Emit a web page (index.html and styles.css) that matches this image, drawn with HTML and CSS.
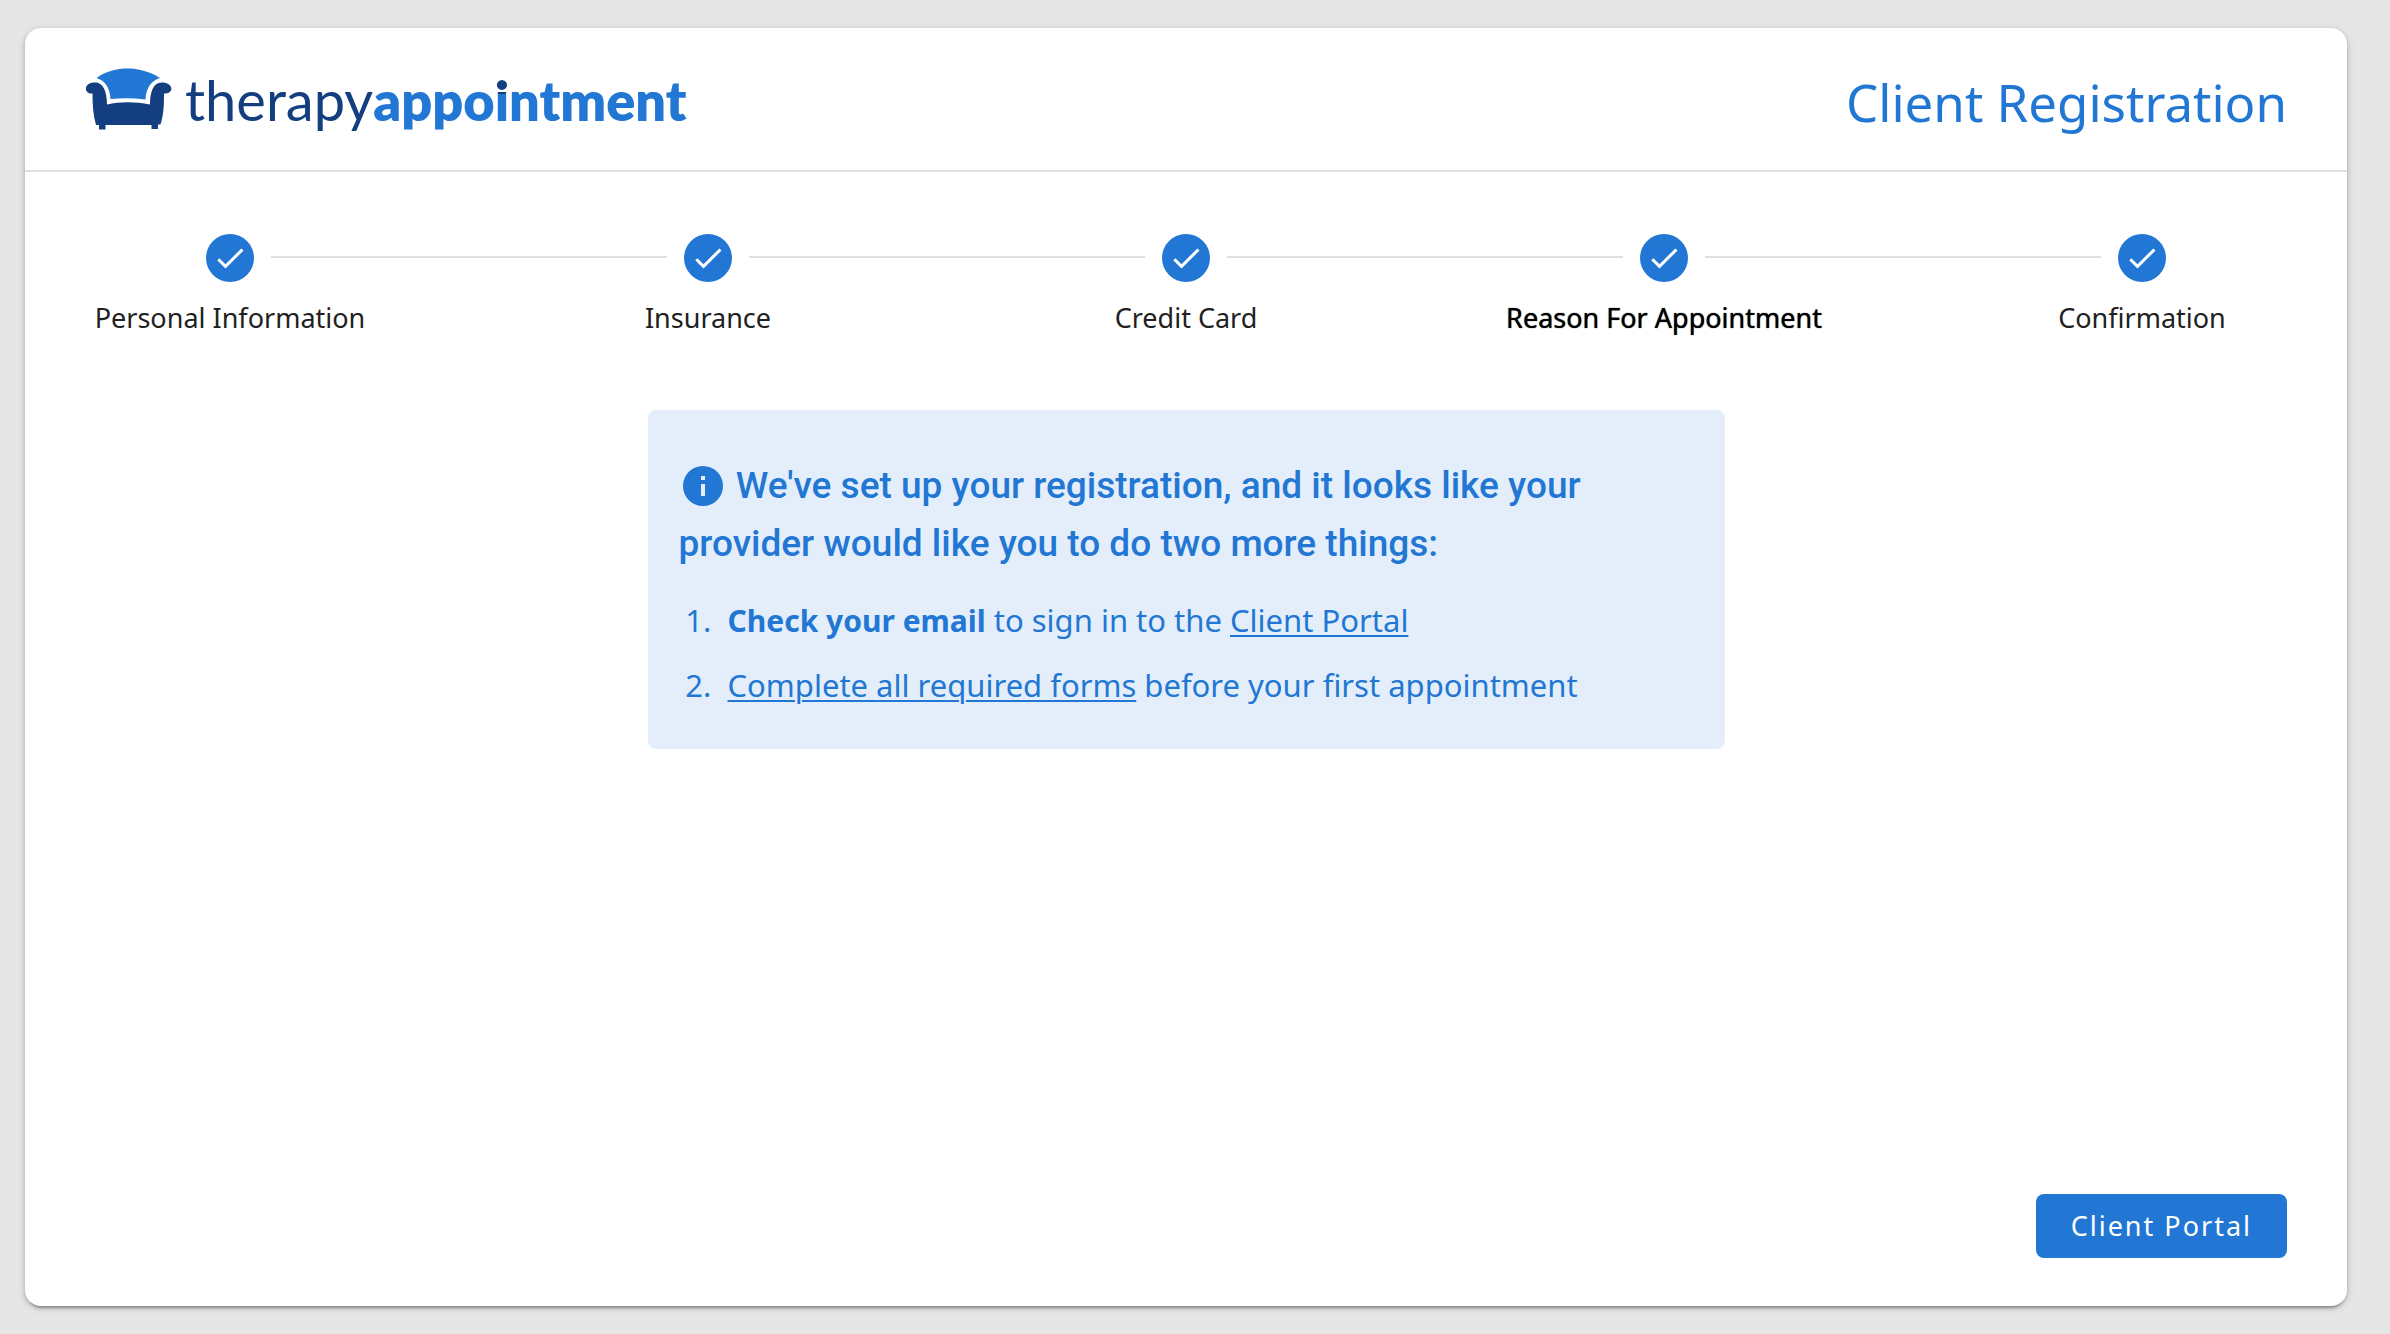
FILE: index.html
```
<!DOCTYPE html>
<html lang="en">
<head>
  <meta charset="utf-8">
  <meta name="viewport" content="width=device-width, initial-scale=1">
  <title>Client Registration</title>
  <link rel="stylesheet" href="styles.css">
</head>
<body>
  <svg class="sprite" aria-hidden="true">
    <symbol id="check" viewBox="0 0 24 24">
      <path d="M21 7 9 19l-5.5-5.5 1.41-1.41L9 16.17 19.59 5.59 21 7Z"/>
    </symbol>
  </svg>
  <div class="card">
    <header class="header">
      <div class="logo">
        <svg class="chair" viewBox="0 0 88 62" aria-hidden="true">
          <path class="light" d="M11.500 10C21 3 32 .5 42.500 .5S64 3 75 10C66 13 61 20 60.500 31.500 49 30 37 30 25.500 31 25 20 20 12.500 11.500 10Z"/>
          <path class="dark" d="M9 14.500c8-1 13 7 13 22 13-3 28-3 43 0 0-14 4-23 13-22 11 1 11 11.500 1 11 0 10 0 20-3.500 31H73v4.500h-6.500V57H20.500v4.500H14V57h-3C8 47 7.500 36 7.500 25.500-2 26-1 14.500 9 14.500Z"/>
        </svg>
        <span class="wordmark"><span class="therapy">therapy</span><span class="appointment">appo<span class="dotted">i</span>ntment</span></span>
      </div>
      <h1 class="title">Client Registration</h1>
    </header>

    <ol class="steps">
      <li class="step"><span class="badge"><svg><use href="#check"/></svg></span><span>Personal Information</span></li>
      <li class="step"><span class="badge"><svg><use href="#check"/></svg></span><span>Insurance</span></li>
      <li class="step"><span class="badge"><svg><use href="#check"/></svg></span><span>Credit Card</span></li>
      <li class="step current" aria-current="step"><span class="badge"><svg><use href="#check"/></svg></span><span>Reason For Appointment</span></li>
      <li class="step"><span class="badge"><svg><use href="#check"/></svg></span><span>Confirmation</span></li>
    </ol>

    <main class="content">
      <section class="notice">
        <h2 class="notice-title"><svg class="info" viewBox="0 0 24 24" aria-hidden="true"><path d="M13 9h-2V7h2v2m0 8h-2v-6h2v6M12 2a10 10 0 1 0 0 20 10 10 0 0 0 0-20Z"/></svg> We've set up your registration, and it looks like your provider would like you to do two more things:</h2>
        <ol class="tasks">
          <li><strong>Check your email</strong> to sign in to the <a href="#portal">Client Portal</a></li>
          <li><a href="#forms">Complete all required forms</a> before your first appointment</li>
        </ol>
      </section>
    </main>

    <footer class="footer">
      <button class="button" type="button">Client Portal</button>
    </footer>
  </div>
</body>
</html>
```

FILE: styles.css
```
:root {
  --blue: #2177d3;
  --navy: #133e80;
  --line: #e0e0e0;
}

* {
  box-sizing: border-box;
}

body {
  margin: 0;
  min-height: 100vh;
  display: flex;
  padding: 28px 43px 28px 25px;
  background: #e6e6e6;
  color: #212121;
  font-family: "Noto Sans", sans-serif;
  font-size: 27px;
  line-height: 36px;
}

.sprite {
  position: absolute;
  width: 0;
  height: 0;
}

.card {
  flex: 1;
  display: flex;
  flex-direction: column;
  background: #fff;
  border-radius: 16px;
  box-shadow: 0 6px 2px -4px rgba(0, 0, 0, .2), 0 2px 4px rgba(0, 0, 0, .2), 0 2px 10px rgba(0, 0, 0, .12);
}

.header {
  display: flex;
  align-items: center;
  justify-content: space-between;
  height: 144px;
  padding: 0 60px;
  border-bottom: 2px solid var(--line);
}

.logo {
  display: flex;
  align-items: center;
  gap: 12px;
}

.chair {
  width: 88px;
  height: 62px;
}

.light {
  fill: var(--blue);
}

.dark {
  fill: var(--navy);
}

.wordmark {
  padding-top: 12px;
  font-family: Lato, sans-serif;
  line-height: 72px;
}

.therapy {
  color: var(--navy);
  font-size: 56px;
  font-weight: 400;
}

.appointment {
  color: var(--blue);
  font-size: 54px;
  font-weight: 800;
}

.dotted {
  background: linear-gradient(var(--navy) 40%, var(--blue) 40%);
  background-clip: text;
  color: transparent;
}

.title {
  margin: 0;
  padding-top: 6px;
  color: var(--blue);
  font-size: 51px;
  font-weight: 400;
  line-height: 64px;
}

.steps {
  display: flex;
  justify-content: space-between;
  margin: 0;
  padding: 62px 30px 0;
  list-style: none;
}

.step {
  position: relative;
  flex: 0 1 350px;
  display: flex;
  flex-direction: column;
  align-items: center;
  gap: 18px;
}

/* Connector from this step's badge to the next one. */
.step:not(:last-child)::after {
  content: "";
  position: absolute;
  top: 22px;
  left: calc(50% + 41px);
  width: calc((100vw - 128px - 350px) / 4 - 82px);
  height: 2px;
  background: var(--line);
}

.current {
  color: #000;
  text-shadow: 0 0 1px #000;
}

.badge {
  display: grid;
  place-items: center;
  width: 48px;
  height: 48px;
  border-radius: 50%;
  background: var(--blue);
}

.badge svg {
  width: 36px;
  height: 36px;
  fill: #fff;
}

.content {
  flex: 1;
  padding: 74px 84px;
}

.notice {
  width: 50%;
  margin: 0 auto;
  padding: 47px 32px 32px 31px;
  border-radius: 8px;
  background: #e4eefa;
  color: var(--blue);
}

.notice-title {
  margin: 0 0 15px;
  font: 500 37px/58px Roboto, sans-serif;
}

.info {
  width: 48px;
  height: 48px;
  fill: currentColor;
  vertical-align: -12px;
}

.tasks {
  margin: 0;
  padding-left: 49px;
  font-size: 31px;
  line-height: 64px;
}

.tasks li::marker {
  content: counter(list-item) ".\a0\a0";
}

.tasks strong {
  font-size: 30px;
}

.tasks a {
  color: inherit;
  text-decoration-thickness: 2px;
  text-underline-offset: 3px;
}

.footer {
  display: flex;
  justify-content: flex-end;
  padding: 0 60px 48px;
}

.button {
  padding: 0 35px;
  border: 0;
  border-radius: 8px;
  background: var(--blue);
  color: #fff;
  font: inherit;
  line-height: 64px;
  letter-spacing: 2px;
  cursor: pointer;
}
```
